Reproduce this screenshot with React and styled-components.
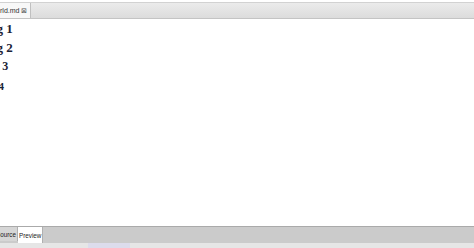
import React from 'react'
import styled, { createGlobalStyle } from 'styled-components'

const Global = createGlobalStyle`
  html, body { margin: 0; padding: 0; background: #ffffff; }
  body { width: 474px; height: 248px; overflow: hidden; }
`

const Editor = styled.div`
  width: 474px;
  height: 248px;
  display: flex;
  flex-direction: column;
  background: #ffffff;
  overflow: hidden;
`

const TabBar = styled.div`
  height: 15px;
  margin-top: 2px;
  display: flex;
  background: linear-gradient(#ebebeb, #dcdcdc);
  border-top: 1px solid #d2d2d2;
  border-bottom: 1px solid #c4c4c4;
`

const FileTab = styled.div`
  width: 31px;
  display: flex;
  align-items: center;
  justify-content: space-between;
  padding-right: 3px;
  box-sizing: border-box;
  background: #f8f8f8;
  border-right: 1px solid #c0c0c0;
  font-family: 'Liberation Sans', Arial, sans-serif;
  font-size: 7px;
  color: #333;
`

const Close = styled.span`
  font-size: 7px;
  color: #555;
`

const Preview = styled.div`
  flex: 1;
  padding-top: 3px;
  margin-left: -44px;
  font-family: 'Liberation Serif', 'Times New Roman', serif;
  font-weight: bold;
  color: #1a2236;
`

const Heading = styled.div`
  font-size: ${p => p.size}px;
  line-height: ${p => p.size}px;
  margin-bottom: ${p => p.gap}px;
  white-space: nowrap;
`

const BottomBar = styled.div`
  height: 16px;
  display: flex;
  align-items: flex-start;
  background: #cbcbcb;
  border-top: 1px solid #aaaaaa;
`

const PageTab = styled.div`
  height: ${p => (p.active ? 16 : 14)}px;
  padding: 0 1px;
  margin-left: ${p => (p.first ? -5 : 0)}px;
  display: flex;
  align-items: center;
  background: ${p => (p.active ? '#ffffff' : '#d6d6d6')};
  border-right: 1px solid #b0b0b0;
  font-family: 'Liberation Sans', Arial, sans-serif;
  font-size: 6.3px;
  color: #222;
`

const StatusStrip = styled.div`
  height: 5px;
  background: #e6e6e6;
  display: flex;
`

const Scroll = styled.div`
  width: 42px;
  margin-left: 88px;
  background: #dcdcec;
`

export default function App() {
  return (
    <Editor>
      <Global />
      <TabBar>
        <FileTab>
          <span>rld.md</span>
          <Close>⊠</Close>
        </FileTab>
      </TabBar>
      <Preview>
        <Heading size={13} gap={6}>Heading 1</Heading>
        <Heading size={13} gap={6}>Heading 2</Heading>
        <Heading size={12} gap={8.5}>Heading 3</Heading>
        <Heading size={11} gap={0}>Heading 4</Heading>
      </Preview>
      <BottomBar>
        <PageTab first>Source</PageTab>
        <PageTab active>Preview</PageTab>
      </BottomBar>
      <StatusStrip>
        <Scroll />
      </StatusStrip>
    </Editor>
  )
}
